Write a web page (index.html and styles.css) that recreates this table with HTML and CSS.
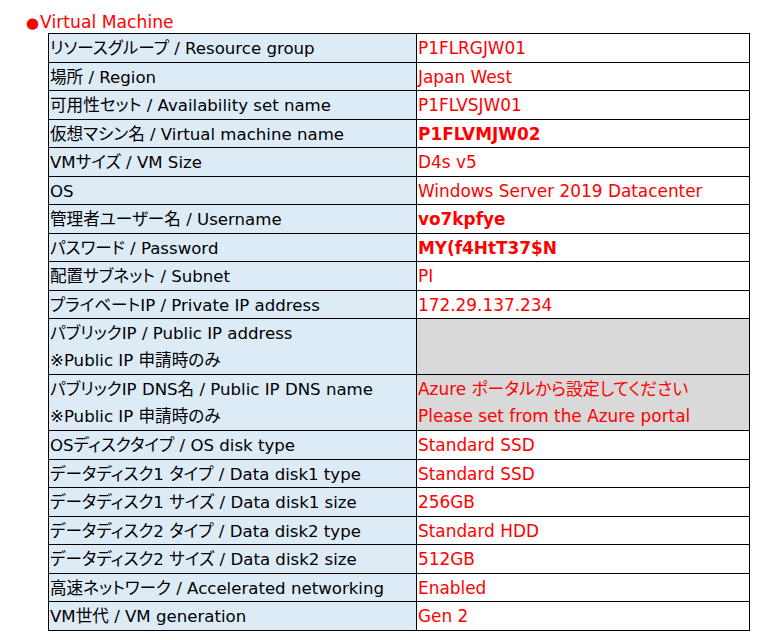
FILE: index.html
```html
<!DOCTYPE html>
<html lang="ja">
<head>
<meta charset="utf-8">
<link rel="stylesheet" href="styles.css">
</head>
<body>
<div class="title"><span class="dot">●</span>Virtual Machine</div>
<table class="vm">
  <tr><td class="k">リソースグループ / Resource group</td><td class="v">P1FLRGJW01</td></tr>
  <tr><td class="k">場所 / Region</td><td class="v">Japan West</td></tr>
  <tr><td class="k">可用性セット / Availability set name</td><td class="v">P1FLVSJW01</td></tr>
  <tr><td class="k">仮想マシン名 / Virtual machine name</td><td class="v b">P1FLVMJW02</td></tr>
  <tr><td class="k">VMサイズ / VM Size</td><td class="v">D4s v5</td></tr>
  <tr><td class="k">OS</td><td class="v">Windows Server 2019 Datacenter</td></tr>
  <tr><td class="k">管理者ユーザー名 / Username</td><td class="v b">vo7kpfye</td></tr>
  <tr><td class="k">パスワード / Password</td><td class="v b">MY(f4HtT37$N</td></tr>
  <tr><td class="k">配置サブネット / Subnet</td><td class="v">PI</td></tr>
  <tr><td class="k">プライベートIP / Private IP address</td><td class="v">172.29.137.234</td></tr>
  <tr class="dbl"><td class="k">パブリックIP / Public IP address<br>※Public IP 申請時のみ</td><td class="v g"></td></tr>
  <tr class="dbl"><td class="k">パブリックIP DNS名 / Public IP DNS name<br>※Public IP 申請時のみ</td><td class="v g">Azure ポータルから設定してください<br>Please set from the Azure portal</td></tr>
  <tr><td class="k">OSディスクタイプ / OS disk type</td><td class="v">Standard SSD</td></tr>
  <tr><td class="k">データディスク1 タイプ / Data disk1 type</td><td class="v">Standard SSD</td></tr>
  <tr><td class="k">データディスク1 サイズ / Data disk1 size</td><td class="v">256GB</td></tr>
  <tr><td class="k">データディスク2 タイプ / Data disk2 type</td><td class="v">Standard HDD</td></tr>
  <tr><td class="k">データディスク2 サイズ / Data disk2 size</td><td class="v">512GB</td></tr>
  <tr><td class="k">高速ネットワーク / Accelerated networking</td><td class="v">Enabled</td></tr>
  <tr><td class="k">VM世代 / VM generation</td><td class="v">Gen 2</td></tr>
</table>
</body>
</html>
```
FILE: styles.css
```css
html, body {
  margin: 0;
  padding: 0;
  background: #ffffff;
}
body {
  font-family: "DejaVu Sans", "Noto Sans CJK JP", sans-serif;
  font-feature-settings: "palt";
  font-size: 16.6px;
  color: #000;
}
.title {
  color: #ff0000;
  font-size: 17.2px;
  height: 33px;
  line-height: 45px;
  padding-left: 26px;
  box-sizing: border-box;
}
.dot {
  font-size: 15px;
  margin-right: 1px;
}
.vm {
  margin-left: 48px;
  border-collapse: collapse;
  table-layout: fixed;
  width: 702px;
}
.vm td {
  border: 1px solid #000;
  height: 25.5px;
  padding: 2px 0 0 1px;
  line-height: 25px;
  white-space: nowrap;
  overflow: hidden;
  vertical-align: middle;
}
.vm td.k {
  width: 366px;
  background: #ddebf7;
}
.vm td.v {
  color: #ff0000;
  font-size: 16.9px;
}
.vm td.b {
  font-weight: bold;
}
.vm td.g {
  background: #d9d9d9;
}
.vm tr.dbl td {
  height: 53px;
  padding-top: 1px;
  line-height: 27px;
}
```
